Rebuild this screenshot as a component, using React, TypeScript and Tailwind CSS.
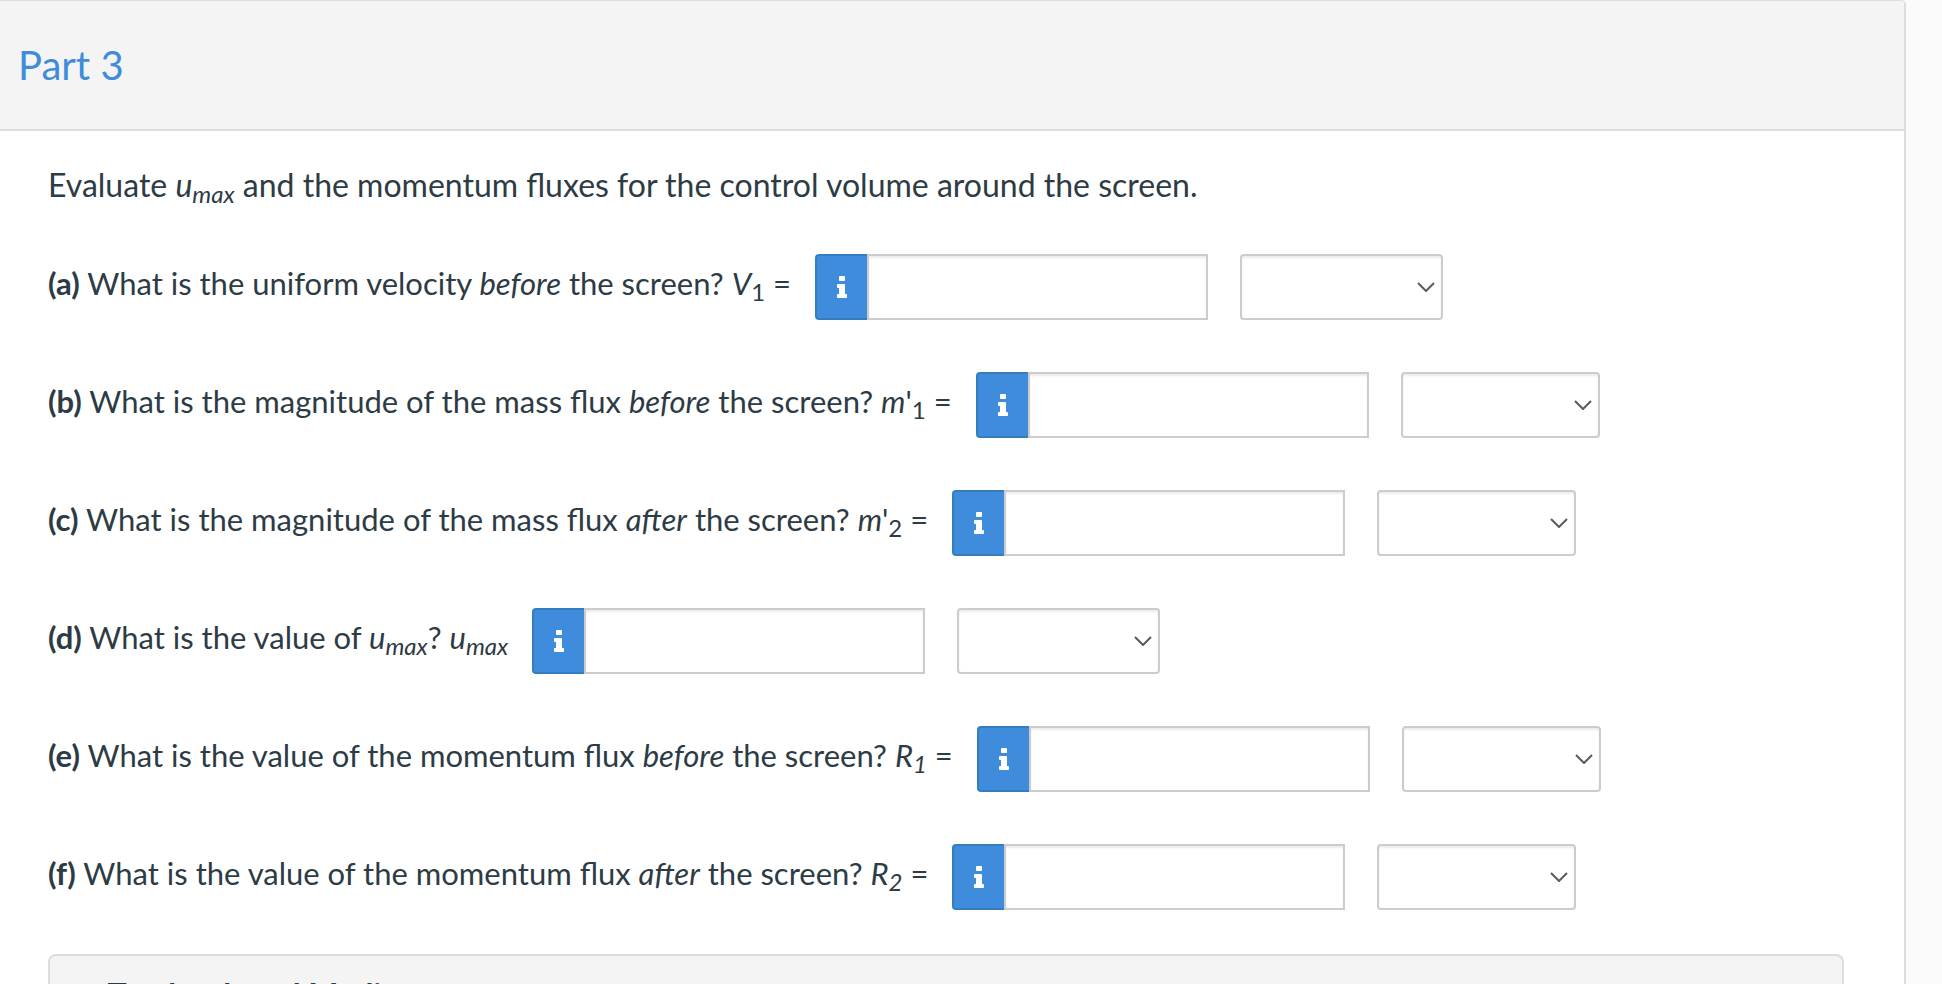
import type { ReactNode } from "react";

type Question = {
  id: string;
  text: ReactNode;
  symbol: ReactNode;
  equals: boolean;
  wideUnits: boolean;
};

function Sub({ children }: { children: ReactNode }) {
  return <sub className="text-[24px] leading-none">{children}</sub>;
}

const questions: Question[] = [
  {
    id: "a",
    text: <>What is the uniform velocity <em>before</em> the screen?</>,
    symbol: <><em>V</em><Sub>1</Sub></>,
    equals: true,
    wideUnits: true,
  },
  {
    id: "b",
    text: <>What is the magnitude of the mass flux <em>before</em> the screen?</>,
    symbol: <><em>m</em>'<Sub>1</Sub></>,
    equals: true,
    wideUnits: false,
  },
  {
    id: "c",
    text: <>What is the magnitude of the mass flux <em>after</em> the screen?</>,
    symbol: <><em>m</em>'<Sub>2</Sub></>,
    equals: true,
    wideUnits: false,
  },
  {
    id: "d",
    text: <>What is the value of <em>u<Sub>max</Sub></em>?</>,
    symbol: <em>u<Sub>max</Sub></em>,
    equals: false,
    wideUnits: true,
  },
  {
    id: "e",
    text: <>What is the value of the momentum flux <em>before</em> the screen?</>,
    symbol: <em>R<Sub>1</Sub></em>,
    equals: true,
    wideUnits: false,
  },
  {
    id: "f",
    text: <>What is the value of the momentum flux <em>after</em> the screen?</>,
    symbol: <em>R<Sub>2</Sub></em>,
    equals: true,
    wideUnits: false,
  },
];

function InfoIcon() {
  return (
    <svg viewBox="0 0 640 1408" className="h-[22px] w-[10px]" fill="currentColor" aria-hidden="true">
      <g transform="matrix(1 0 0 -1 0 1408)">
        <path d="M640 192v-128q0 -26 -19 -45t-45 -19h-512q-26 0 -45 19t-19 45v128q0 26 19 45t45 19h64v384h-64q-26 0 -45 19t-19 45v128q0 26 19 45t45 19h384q26 0 45 -19t19 -45v-576h64q26 0 45 -19t19 -45zM512 1344v-192q0 -26 -19 -45t-45 -19h-256q-26 0 -45 19t-19 45v192q0 26 19 45t45 19h256q26 0 45 -19t19 -45z" />
      </g>
    </svg>
  );
}

function Chevron() {
  return (
    <svg
      viewBox="0 0 18 10"
      className="pointer-events-none absolute top-[28px] right-2 h-[10px] w-[18px]"
      fill="none"
      stroke="#5a5a5a"
      strokeWidth="2"
      aria-hidden="true"
    >
      <path d="M1 1l8 8 8-8" />
    </svg>
  );
}

function QuestionRow({ q }: { q: Question }) {
  return (
    <div className="flex items-center">
      <label htmlFor={`answer-${q.id}`} className="pb-2 text-[31px] leading-[46px]">
        <strong>({q.id})</strong> {q.text} {q.symbol}
        {q.equals && " ="}
      </label>
      <div className="ml-6 flex">
        <button
          type="button"
          aria-label={`Information for part ${q.id}`}
          className="flex h-[66px] w-[52px] items-center justify-center rounded-l-[4px] border-2 border-r-0 border-[#357ebd] bg-[#3f8cdc] text-white"
        >
          <InfoIcon />
        </button>
        <input
          id={`answer-${q.id}`}
          type="text"
          className="h-[66px] w-[341px] border-2 border-[#cccccc] bg-white px-3 shadow-[inset_0_2px_2px_rgba(0,0,0,0.075)] outline-none"
        />
      </div>
      <div className="relative ml-8">
        <select
          aria-label={`Units for part ${q.id}`}
          className={`block h-[66px] appearance-none rounded-[4px] border-2 border-[#cccccc] bg-white px-3 shadow-[inset_0_2px_2px_rgba(0,0,0,0.075)] outline-none ${q.wideUnits ? "w-[203px]" : "w-[199px]"}`}
        >
          <option value=""></option>
        </select>
        <Chevron />
      </div>
    </div>
  );
}

export default function App() {
  return (
    <div className="h-screen overflow-hidden bg-[#fafafa] pr-9 font-['Lato',sans-serif] text-[32px] text-[#2d3b45]">
      <main className="min-h-full rounded-tr-[5px] border-t border-r-2 border-[#dddddd] bg-white">
        <header className="rounded-tr-[4px] border-b-2 border-[#dddddd] bg-[#f4f4f4] px-[18px] py-10">
          <h1 className="text-[40px] leading-[48px] text-[#3f8cdc]">Part 3</h1>
        </header>
        <section className="pt-8 pr-[60px] pl-12">
          <p className="leading-[44px]">
            Evaluate <em>u<Sub>max</Sub></em> and the momentum fluxes for the control volume around the screen.
          </p>
          <form className="mt-[47px] flex flex-col gap-[52px]" onSubmit={(e) => e.preventDefault()}>
            {questions.map((q) => (
              <QuestionRow key={q.id} q={q} />
            ))}
          </form>
          <div className="mt-[44px] rounded-[8px] border-2 border-[#dddddd] bg-[#f4f4f4] px-11 py-4">
            <a href="#etextbook" className="block leading-[46px] font-bold">eTextbook and Media</a>
          </div>
        </section>
      </main>
    </div>
  );
}
